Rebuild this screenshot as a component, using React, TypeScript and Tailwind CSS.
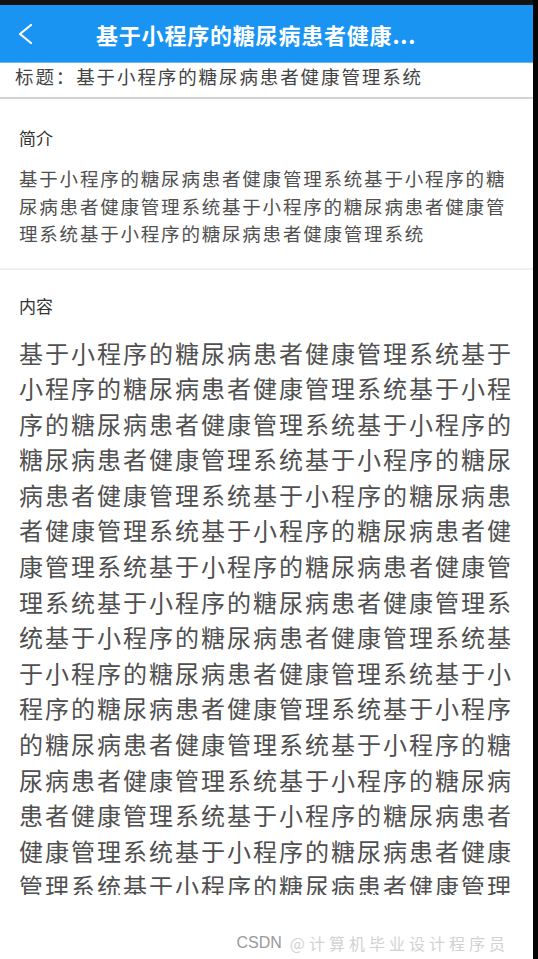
const T = "基于小程序的糖尿病患者健康管理系统";

export default function App() {
  const intro = T.repeat(4);
  const content = T.repeat(22);
  return (
    <div className="flex h-[959px] w-[538px] overflow-hidden bg-[#050505] font-['Noto_Sans_CJK_SC','Noto_Sans',sans-serif]">
      <div className="flex w-[533px] flex-col bg-white">
        <div className="h-[5px] bg-[#121212]" />
        <div className="flex h-[58px] items-center border-b border-[#6fb9f0] bg-[#1a94f3]">
          <svg className="ml-[17px]" width="16" height="22" viewBox="0 0 16 22" fill="none">
            <polyline points="14,2 3,11 14,20" stroke="white" strokeWidth="2.2" strokeLinecap="round" strokeLinejoin="round" />
          </svg>
          <div className="ml-[63px] whitespace-nowrap text-[22px] font-bold leading-[30px] tracking-[0.8px] text-white">
            基于小程序的糖尿病患者健康...
          </div>
        </div>
        <div className="h-[34px] pl-[15px] pt-[1px] text-[18.5px] leading-[24px] tracking-[1.9px] text-[#444]">
          标题：{T}
        </div>
        <div className="h-[2px] bg-[#d2d2d2]" />
        <div className="pb-[20px] pl-[19px] pt-[27px]">
          <div className="text-[17px] leading-[24px] text-[#333]">简介</div>
          <p className="mt-[15px] w-[490px] break-all text-[18.5px] leading-[27.5px] tracking-[1.8px] text-[#505050]">
            {intro}
          </p>
        </div>
        <div className="h-[2px] bg-[#f0f0f0]" />
        <div className="pl-[19px] pt-[24px]">
          <div className="text-[17px] leading-[24px] text-[#333]">内容</div>
          <div className="mt-[17px] h-[560px] overflow-hidden">
            <p className="w-[505px] break-all text-[24px] leading-[35.6px] tracking-[2px] text-[#505050]">
              {content}
            </p>
          </div>
        </div>
        <div className="flex flex-1 justify-end pr-[24px] pt-[32px]">
          <div className="flex items-center gap-[8px] text-[16px] leading-[20px]">
            <span className="font-['Liberation_Sans',sans-serif] text-[#9a9a9a]">CSDN</span>
            <span className="tracking-[4px] text-[#d2d2d2]">@计算机毕业设计程序员</span>
          </div>
        </div>
      </div>
      <div className="w-[5px] bg-[#050505]" />
    </div>
  );
}
